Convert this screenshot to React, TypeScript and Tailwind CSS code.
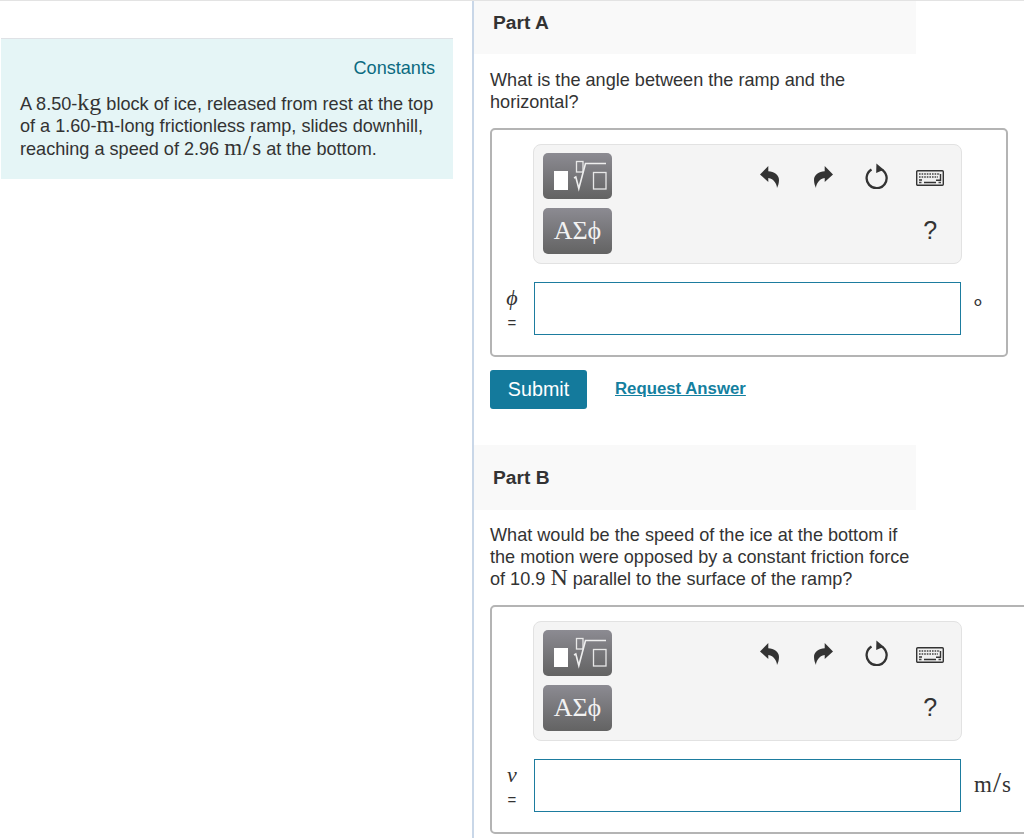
const MATH = "font-['Liberation_Serif',serif] leading-[0]";

// m/s with the taller slash the math renderer draws
const SpeedUnit = ({ className }: { className: string }) => (
	<span className={`${MATH} whitespace-nowrap ${className}`}>
		m<span className="mx-px text-[29px] font-light">/</span>s
	</span>
);

const RootIcon = () => (
	<svg viewBox="0 0 68 46" className="h-[46px] w-[68px]" fill="none">
		<rect x="10" y="18" width="14" height="19" fill="#fff" />
		<rect x="32.5" y="8.5" width="6.5" height="10.5" stroke="#e8e8e8" strokeWidth="1.3" />
		<path d="M30 25l1.8-1 3 11.5L41.5 10.5H62" stroke="#eee" strokeWidth="1.6" />
		<rect x="49.5" y="19.5" width="12.5" height="16.5" stroke="#e8e8e8" strokeWidth="1.3" />
	</svg>
);

const ArrowIcon = ({ className = "" }: { className?: string }) => (
	<svg viewBox="0 0 19 22" className={`h-[22px] w-[19px] ${className}`}>
		<path d="M0 8.5L8.3 0v5.2C14 5.5 19 8.5 19 14c0 3-1 6-2 8 0-3.5-3-9.5-8.7-10v4z" fill="#333" />
	</svg>
);

const RotateIcon = () => (
	<svg viewBox="0 0 24 26" className="h-[26px] w-[24px]" fill="none">
		<path d="M16 6.2A10 10 0 1 1 6.5 6.6" stroke="#333" strokeWidth="2.3" />
		<path d="M11.4 0.5l7.4 6.2-7.6 3.4z" fill="#333" />
	</svg>
);

const KeyboardIcon = () => (
	<svg viewBox="0 0 28 16" className="h-4 w-7" fill="none">
		<rect x="0.7" y="0.7" width="26.6" height="14.6" rx="1" fill="#f0f0f0" stroke="#333" strokeWidth="1.4" />
		<path d="M3 4h21M3 7h19" stroke="#444" strokeWidth="1.5" strokeDasharray="1.6 1" />
		<path d="M24.5 4v6.2H20M3 10h3" stroke="#333" strokeWidth="1.4" />
		<path d="M8 12.5h12" stroke="#333" strokeWidth="1.5" />
		<path d="M3 12.5h2.5M22.5 12.5H25" stroke="#444" strokeWidth="1.4" />
	</svg>
);

const MathButton = ({ children }: { children: React.ReactNode }) => (
	<button
		type="button"
		className="flex h-[46px] w-[69px] items-center justify-center rounded-[5px] bg-gradient-to-b from-[#8c8b92] to-[#636363] text-white"
	>
		{children}
	</button>
);

const Toolbar = () => (
	<div className="-ml-px flex h-[120px] w-[429px] rounded-[8px] border border-[#e2e2e2] bg-[#f4f4f4] pt-2 pl-[9px]">
		<div className="flex flex-col gap-[9px]">
			<MathButton>
				<RootIcon />
			</MathButton>
			<MathButton>
				<span className="font-['Liberation_Serif',serif] text-[26px] text-[#f2f2f2]">ΑΣϕ</span>
			</MathButton>
		</div>
		<div className="ml-auto flex flex-col pr-1">
			<div className="flex h-[46px]">
				<div className="flex w-[53.5px] items-center justify-center pt-[2px]">
					<ArrowIcon />
				</div>
				<div className="flex w-[53.5px] items-center justify-center pt-[2px]">
					<ArrowIcon className="-scale-x-100" />
				</div>
				<div className="flex w-[53.5px] items-center justify-center">
					<RotateIcon />
				</div>
				<div className="flex w-[53.5px] items-center justify-center pt-[3px]">
					<KeyboardIcon />
				</div>
			</div>
			<div className="mt-[9px] flex h-[46px] justify-end">
				<div className="flex w-[53.5px] items-center justify-center pb-[2px] text-[25px] text-[#333]">?</div>
			</div>
		</div>
	</div>
);

type AnswerBoxProps = {
	symbol: string;
	unit: React.ReactNode;
	width: string;
};

const AnswerBox = ({ symbol, unit, width }: AnswerBoxProps) => (
	<div className={`${width} mt-[15px] ml-4 flex h-[229px] shrink-0 flex-col rounded-[5px] border-2 border-[#b4b4b4] pt-[14px] pl-[42px]`}>
		<Toolbar />
		<div className="mt-[18px] flex h-[53px] items-center">
			<div className="-ml-[42px] flex w-[42px] shrink-0 flex-col items-center pr-[2px]">
				<span className="mb-[2px] font-['Liberation_Serif',serif] text-[22px] leading-[26px] text-[#333] italic">{symbol}</span>
				<span className="text-[15px] leading-[20px] text-[#333]">=</span>
			</div>
			<div className="h-[53px] w-[427px] shrink-0 border border-[#1d7c9f] bg-white" />
			<div className="flex pl-[13px] text-[#333]">{unit}</div>
		</div>
	</div>
);

const App = () => (
	<div className="flex h-[838px] w-[1024px] overflow-hidden border-t border-[#e3e3e3] bg-white font-['Liberation_Sans',sans-serif] text-[18.1px] leading-[22.5px] text-[#333]">
		<div className="w-[472px] shrink-0 pt-[37px] pl-px">
			<div className="h-[141px] w-[452px] border-t border-[#dfe2e6] bg-[#e5f5f6] pt-[18px] pr-[18px] pl-[19px]">
				<div className="text-right text-[#0b6a80]">Constants</div>
				<p className="mt-[13px] w-[416px]">
					A 8.50-<span className={`${MATH} text-[24px]`}>kg</span> block of ice, released from rest at the top of a 1.60-
					<span className={`${MATH} text-[23px]`}>m</span>-long frictionless ramp, slides downhill, reaching a speed of 2.96{" "}
					<SpeedUnit className="text-[23px]" /> at the bottom.
				</p>
			</div>
		</div>
		<div className="flex min-w-0 flex-1 flex-col border-l-2 border-[#c9d7e8]">
			<div className="flex h-[53px] w-[442px] shrink-0 bg-[#f9f9f9] pt-[11px] pl-[19px] text-[19.2px] font-bold">Part A</div>
			<p className="mt-[15px] w-[400px] pl-4 leading-[22px]">What is the angle between the ramp and the horizontal?</p>
			<AnswerBox symbol="ϕ" width="w-[518px]" unit={<span className="-mt-[14px] -ml-[3px] text-[22px] leading-none">∘</span>} />
			<div className="mt-[13px] ml-4 flex shrink-0 items-start">
				<button type="button" className="h-[39px] w-[97px] rounded-[3px] bg-[#147a9c] text-[19.7px] text-white">
					Submit
				</button>
				<a href="#answer" className="mt-2 ml-7 text-[16.8px] font-bold text-[#14809f] underline">
					Request Answer
				</a>
			</div>
			<div className="mt-9 flex h-[65px] w-[442px] shrink-0 items-center bg-[#f9f9f9] pt-[2px] pl-[19px] text-[19.2px] font-bold">Part B</div>
			<p className="mt-[14px] w-[438px] pl-4 leading-[22px]">
				What would be the speed of the ice at the bottom if the motion were opposed by a constant friction force of 10.9{" "}
				<span className={`${MATH} text-[24px]`}>N</span> parallel to the surface of the ramp?
			</p>
			<AnswerBox symbol="v" width="w-[560px]" unit={<SpeedUnit className="-mt-1 text-[23px]" />} />
		</div>
	</div>
);

export default App;
